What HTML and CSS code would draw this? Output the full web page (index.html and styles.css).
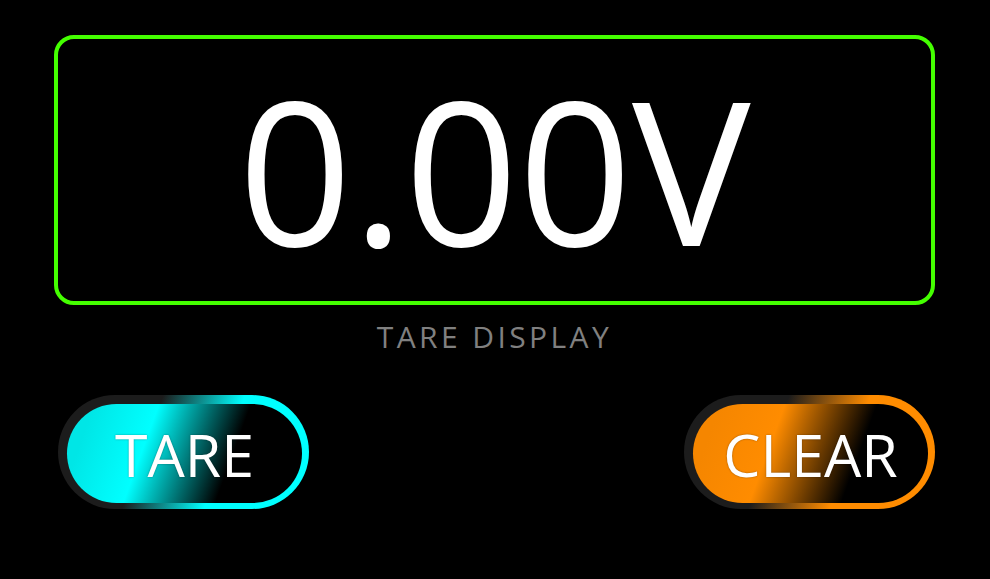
FILE: index.html
```html
<!DOCTYPE html>
<html lang="en">
<head>
    <meta charset="UTF-8">
    <meta name="viewport" content="width=device-width, initial-scale=1.0">
    <title>Tare Display</title>
    <link rel="stylesheet" href="styles.css">
</head>
<body>

<div class="panel">
    <div class="display">
        <span class="reading" id="reading">0.00V</span>
    </div>
    <div class="caption">TARE DISPLAY</div>

    <div class="controls">
        <button class="pill tare" type="button">
            <span class="pill-inner">TARE</span>
        </button>
        <button class="pill clear" type="button">
            <span class="pill-inner">CLEAR</span>
        </button>
    </div>
</div>

</body>
</html>
```

FILE: styles.css
```css
body {
    font-family: 'Open Sans', 'Noto Sans', sans-serif;
    background-color: #000;
    color: #fff;
    margin: 0;
}
.panel {
    padding: 35px 55px 0 54px;
}
.display {
    height: 262px;
    border: 4px solid #44ff00;
    border-radius: 20px;
    display: flex;
    align-items: center;
    justify-content: center;
}
.reading {
    font-size: 199px;
    line-height: 1;
    margin-top: -4px;
    color: #fff;
}
.caption {
    text-align: center;
    font-size: 30px;
    letter-spacing: 3.4px;
    color: #808080;
    margin-top: 11px;
}
.controls {
    display: flex;
    justify-content: space-between;
    margin-top: 38px;
    padding-left: 4px;
}
.pill {
    width: 251px;
    height: 114px;
    padding: 9px 7px 6px 9px;
    border: none;
    border-radius: 57px;
    font-family: inherit;
    cursor: pointer;
}
.pill-inner {
    display: flex;
    align-items: center;
    justify-content: center;
    height: 100%;
    border-radius: 50px;
    font-size: 59px;
    color: #fff;
    text-shadow: 0 0 2px rgba(0, 0, 0, 0.4);
}
.tare {
    background: linear-gradient(110deg, #1c1c1c 36%, #00ffff 64%);
}
.tare .pill-inner {
    background: linear-gradient(110deg, #00e6e6 10%, #00ffff 34%, #000 68%);
}
.clear {
    background: linear-gradient(110deg, #1c1c1c 36%, #ff8c00 64%);
}
.clear .pill-inner {
    background: linear-gradient(110deg, #f58600 10%, #ff8c00 34%, #000 68%);
}
```
